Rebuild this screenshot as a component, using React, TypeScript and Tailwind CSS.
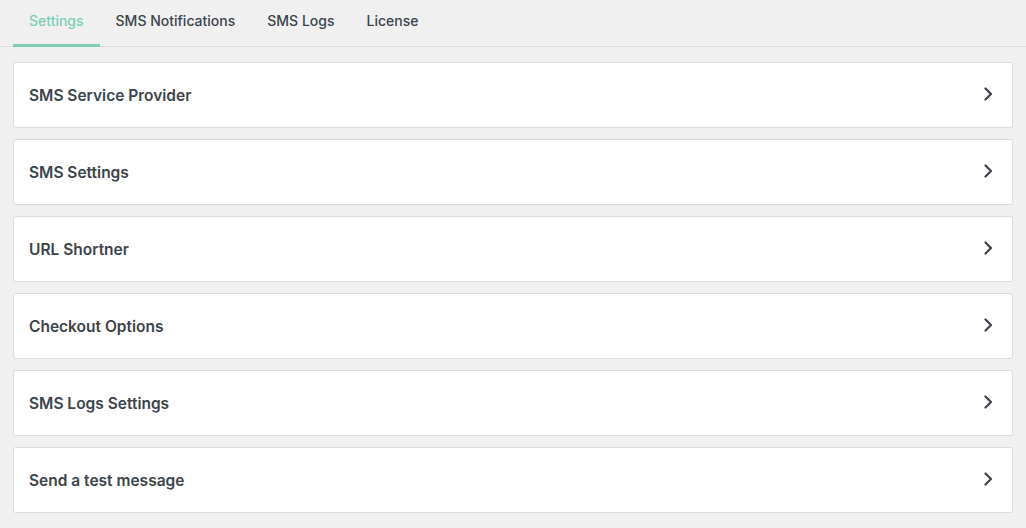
import { useState } from 'react'

const tabs = ['Settings', 'SMS Notifications', 'SMS Logs', 'License']

const sections = [
  'SMS Service Provider',
  'SMS Settings',
  'URL Shortner',
  'Checkout Options',
  'SMS Logs Settings',
  'Send a test message',
]

function Chevron() {
  return (
    <svg width="12" height="14" viewBox="0 0 12 14" fill="none" aria-hidden className="-mt-[4px]">
      <path d="M3.5 1.5 9 7l-5.5 5.5" stroke="#3c434a" strokeWidth="2.2" strokeLinecap="round" strokeLinejoin="round" />
    </svg>
  )
}

export default function App() {
  const [active, setActive] = useState(0)

  return (
    <div className="min-h-[528px] w-full bg-[#f0f0f1] font-['Inter',sans-serif] text-[#3c434a]">
      <nav className="flex h-[47px] border-b border-[#dcdcde] px-[13px]">
        {tabs.map((t, i) => (
          <button
            key={t}
            type="button"
            onClick={() => setActive(i)}
            className={`-mb-px flex h-[47px] items-center border-b-[3px] px-4 pb-[4px] text-[14px] font-medium ${
              i === active ? 'border-[#7fcdb5] text-[#7fcdb5]' : 'border-transparent text-[#3c434a]'
            }`}
          >
            {t}
          </button>
        ))}
      </nav>

      <div className="flex flex-col gap-[11px] px-[13px] pt-[15px] pb-[14px]">
        {sections.map((s) => (
          <div
            key={s}
            className="flex h-[66px] items-center justify-between rounded-[3px] border border-[#dcdcde] bg-white pt-[2px] pr-[18px] pl-[15px]"
          >
            <span className="text-[15.5px] font-semibold">{s}</span>
            <Chevron />
          </div>
        ))}
      </div>
    </div>
  )
}
